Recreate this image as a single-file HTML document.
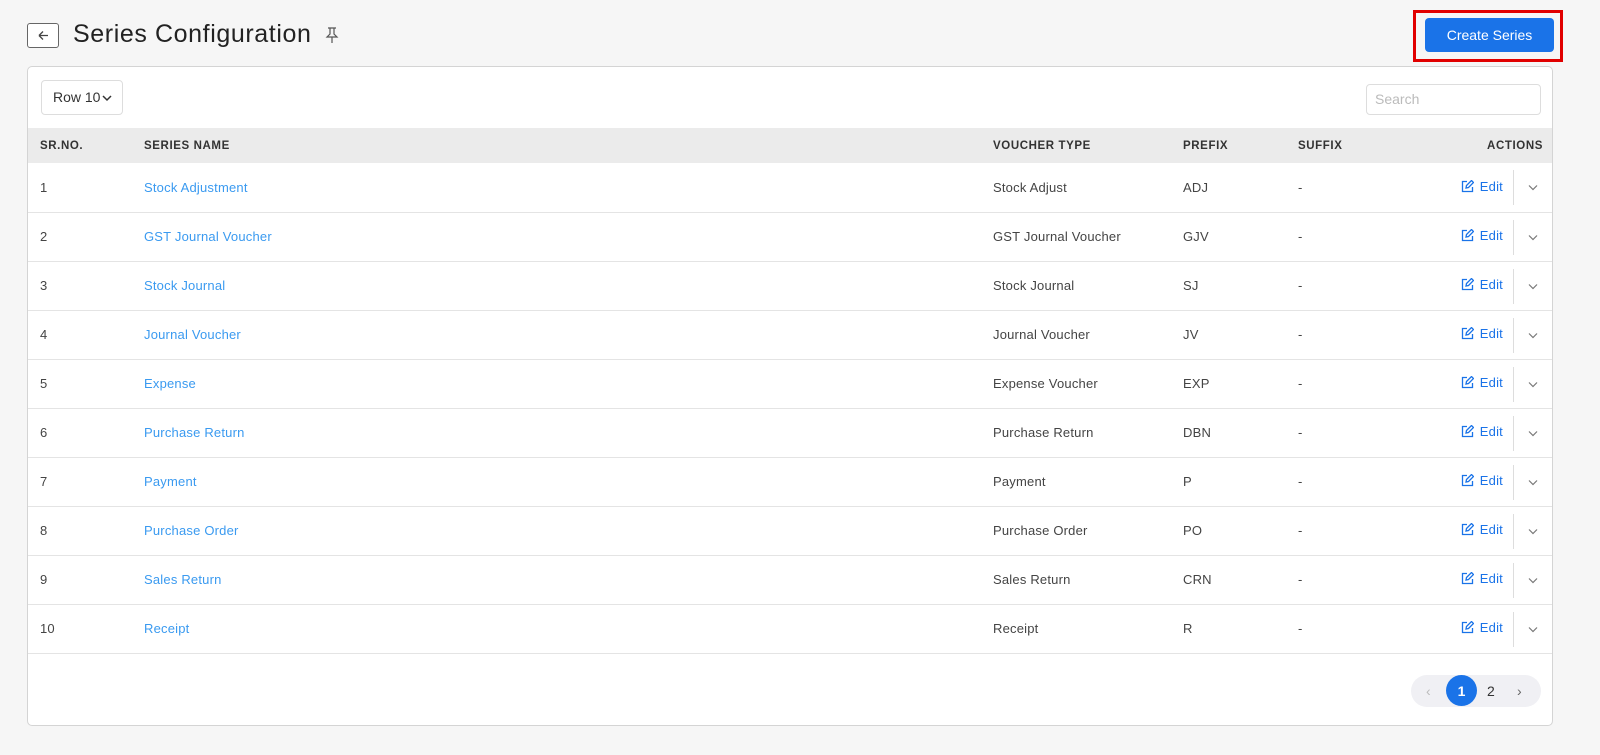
<!DOCTYPE html>
<html><head><style>
*{box-sizing:border-box;margin:0;padding:0}
body{width:1600px;height:755px;background:#f6f6f6;font-family:"Liberation Sans",sans-serif;color:#333;position:relative;overflow:hidden}
.back{position:absolute;left:27px;top:23px;width:32px;height:25px;border:1px solid #666;border-radius:3px;background:#fff}
h1{position:absolute;left:73px;top:20px;font-size:25px;font-weight:normal;color:#222;letter-spacing:.6px}
.pin{position:absolute;left:325px;top:26px}
.redbox{position:absolute;left:1413px;top:10px;width:150px;height:52px;border:3px solid #e10000}
.cbtn{position:absolute;left:1425px;top:18px;width:129px;height:34px;background:#1a73e8;border-radius:4px;color:#fff;font-size:14px;text-align:center;line-height:34px}
.card{position:absolute;left:27px;top:66px;width:1526px;height:660px;background:#fff;border:1px solid #d4d4d4;border-radius:5px;overflow:hidden}
.rowsel{position:absolute;left:13px;top:13px;width:82px;height:35px;border:1px solid #ddd;border-radius:4px;font-size:14px;line-height:33px;padding-left:11px;color:#333}
.search{position:absolute;left:1338px;top:17px;width:175px;height:31px;border:1px solid #ddd;border-radius:4px;font-size:14px;color:#bbb;line-height:29px;padding-left:8px}
table{position:absolute;left:0;top:61px;width:1526px;border-collapse:collapse}
th{background:#ebebeb;height:35px;font-size:11.5px;font-weight:bold;letter-spacing:.6px;color:#333;text-align:left}
td{height:49px;border-bottom:1px solid #e4e4e4;font-size:13px;color:#444;letter-spacing:.2px}
td.n{color:#3a9af0}
.act{position:relative;text-align:right;padding-right:13px}
.edit{color:#1a73e8;display:inline-flex;align-items:center;gap:6px;margin-right:38px}
.sep{position:absolute;right:40px;top:7px;width:1px;height:35px;background:#ddd}
.dd{position:absolute;right:16px;top:21px}
.pag{position:absolute;left:1383px;top:608px;width:130px;height:32px;background:#f0f0f4;border-radius:16px;font-size:14px}
.pag span{position:absolute;top:0;line-height:32px}
.cur{left:35px;width:31px;height:31px;border-radius:50%;background:#1a73e8;color:#fff;text-align:center;font-weight:bold}
</style></head><body>
<div class="back"><svg width="30" height="23" viewBox="0 0 30 23"><path d="M11 11.5h9M11 11.5l4-4M11 11.5l4 4" stroke="#444" stroke-width="1.3" fill="none"/></svg></div>
<h1>Series Configuration</h1>
<svg class="pin" width="14" height="18" viewBox="0 0 14 18"><path d="M3 2h8M5 2v6l-3 3h10l-3-3V2M7 11v6" stroke="#555" stroke-width="1.2" fill="none"/></svg>
<div class="redbox"></div>
<div class="cbtn">Create Series</div>
<div class="card">
<div class="rowsel">Row 10 <svg width="10" height="8" viewBox="0 0 10 8" style="margin-left:-2px"><path d="M1 2l4 4 4-4" stroke="#333" stroke-width="1.5" fill="none"/></svg></div>
<div class="search">Search</div>
<table>
<tr><th style="padding-left:12px;width:116px">SR.NO.</th><th style="width:849px">SERIES NAME</th><th style="width:190px">VOUCHER TYPE</th><th style="width:115px">PREFIX</th><th>SUFFIX</th><th style="text-align:right;padding-right:11px">ACTIONS</th></tr>
</table>
<table style="top:96px" id="b">
</table>
<div class="pag"><span style="left:15px;color:#bbb">‹</span><span class="cur">1</span><span style="left:76px">2</span><span style="left:106px;color:#666">›</span></div>
</div>
<script>
var d=[["Stock Adjustment","Stock Adjust","ADJ"],["GST Journal Voucher","GST Journal Voucher","GJV"],["Stock Journal","Stock Journal","SJ"],["Journal Voucher","Journal Voucher","JV"],["Expense","Expense Voucher","EXP"],["Purchase Return","Purchase Return","DBN"],["Payment","Payment","P"],["Purchase Order","Purchase Order","PO"],["Sales Return","Sales Return","CRN"],["Receipt","Receipt","R"]];
var h="";d.forEach(function(r,i){h+='<tr><td style="padding-left:12px;width:116px">'+(i+1)+'</td><td class="n" style="width:849px">'+r[0]+'</td><td style="width:190px">'+r[1]+'</td><td style="width:115px">'+r[2]+'</td><td>-</td><td class="act"><span class="edit"><svg width="13" height="13" viewBox="0 0 13 13"><path d="M6 1.5H1.5v10h10V7M5 8l.5-2.5 5-5 2 2-5 5z" stroke="#1a73e8" stroke-width="1.3" fill="none"/></svg>Edit</span><span class="sep"></span><svg class="dd" width="10" height="7" viewBox="0 0 10 7"><path d="M1 1.5l4 4 4-4" stroke="#777" stroke-width="1.2" fill="none"/></svg></td></tr>'});
document.getElementById("b").innerHTML=h;
</script>
</body></html>
